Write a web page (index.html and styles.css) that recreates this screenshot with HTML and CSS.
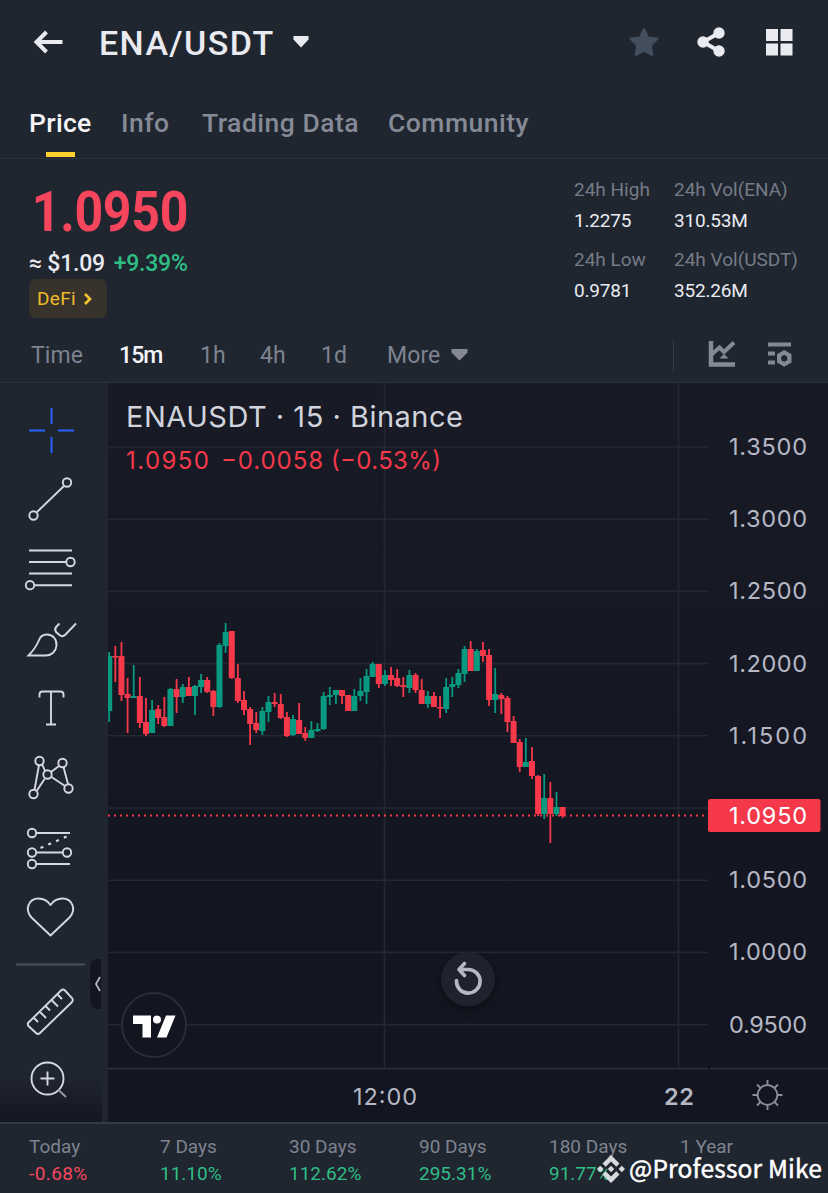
FILE: index.html
```html
<!DOCTYPE html>
<html lang="en">
<head>
    <meta charset="UTF-8">
    <meta name="viewport" content="width=device-width, initial-scale=1.0">
    <title>ENA/USDT</title>
    <link rel="stylesheet" href="styles.css">
</head>
<body>
    <header class="header">
        <svg class="back" width="32" height="26" viewBox="0 0 32 26"><path d="M29.5 13H4M13.5 3L3.5 13L13.5 23" fill="none" stroke="#eaebf0" stroke-width="4"/></svg>
        <h1>ENA/USDT</h1>
        <svg class="caret" width="16" height="12" viewBox="0 0 16 12"><path d="M.5 0h15v3.5L8 11.5L.5 3.5z" fill="#eaebf0"/></svg>
        <div class="actions">
            <svg width="30" height="30" viewBox="0 0 30 30"><path d="M15 2L19 10.5L28.5 11.5L21.7 18.5L23.3 28L15 23.7L6.7 28L8.3 18.5L1.5 11.5L11 10.5z" fill="#434f5c" stroke="#434f5c" stroke-width="2" stroke-linejoin="round"/></svg>
            <svg width="30" height="30" viewBox="0 0 30 30"><path d="M23 6L7 15L23 24" fill="none" stroke="#eaebf0" stroke-width="4"/><g fill="#eaebf0"><circle cx="23" cy="6" r="5.7"/><circle cx="7" cy="15" r="5.7"/><circle cx="23" cy="24" r="5.7"/></g></svg>
            <svg width="28" height="28" viewBox="0 0 28 28"><path d="M1 1h12v12H1zM15.5 1h12v12h-12zM1 15.5h12v12H1zM15.5 15.5h12v12h-12z" fill="#eaebf0"/></svg>
        </div>
    </header>

    <nav class="tabs">
        <a class="active">Price</a>
        <a>Info</a>
        <a>Trading Data</a>
        <a>Community</a>
    </nav>

    <section class="summary">
        <div class="price-box">
            <div class="price">1.0950</div>
            <div class="sub"><span>≈ $1.09</span><span class="up">+9.39%</span></div>
            <div class="tag">DeFi <svg width="9" height="12" viewBox="0 0 9 12"><path d="M2 1L7 6L2 11" fill="none" stroke="#f5c72e" stroke-width="2.6"/></svg></div>
        </div>
        <dl class="stats">
            <div><dt>24h High</dt><dd>1.2275</dd></div>
            <div><dt>24h Vol(ENA)</dt><dd>310.53M</dd></div>
            <div><dt>24h Low</dt><dd>0.9781</dd></div>
            <div><dt>24h Vol(USDT)</dt><dd>352.26M</dd></div>
        </dl>
    </section>

    <nav class="intervals">
        <a>Time</a>
        <a class="active">15m</a>
        <a>1h</a>
        <a>4h</a>
        <a>1d</a>
        <a class="more">More <svg width="17" height="12" viewBox="0 0 17 12"><path d="M.5 0h16v3.5L8.5 11.5L.5 3.5z" fill="#858a96"/></svg></a>
        <div class="chart-actions">
            <svg width="28" height="28" viewBox="0 0 28 28"><path d="M3 1v23.500h24" fill="none" stroke="#848995" stroke-width="4.500"/><path d="M3 15L11.500 7.500L16 12L26 2.500" fill="none" stroke="#848995" stroke-width="4"/><path d="M11.500 18.500l4.500-4.500l4.500 4.500z" fill="#848995"/></svg>
            <svg width="26" height="26" viewBox="0 0 26 26"><path d="M1 1.500h23v4H1zM1 10.500h7v4H1zM1 19.500h7v4H1z" fill="#848995"/><path fill-rule="evenodd" d="M17.200 9L24.500 13.200V21.500L17.200 25.700L10 21.500V13.200zM17.200 14.100a3.200 3.200 0 1 0 .01 0z" fill="#848995"/></svg>
        </div>
    </nav>

    <main class="workspace">
        <aside class="tools">
            <svg width="102" height="739" viewBox="0 383 102 739" fill="none" stroke="#d5d8e0" stroke-width="1.900">
                <!-- crosshair -->
                <path d="M51.500 408v16M51.500 437v16M29 430.500h16M58 430.500h16" stroke="#2962ff" stroke-width="2"/>
                <!-- trend line -->
                <path d="M37 512L64 486"/><circle cx="33.500" cy="515.500" r="4.200"/><circle cx="67" cy="482.500" r="4.200"/>
                <!-- fib levels -->
                <path d="M29 550.500h43M29 562h37M29 573.500h43M35 585.200h37"/><circle cx="70.500" cy="562" r="4.200"/><circle cx="30" cy="585.200" r="4.200"/>
                <!-- brush -->
                <path d="M28.500 655.500C34 650 37 645 39 640Q41 634.500 47 634.500C53 634.500 57 639.500 56.500 645.500C56 651.500 51.500 655.500 46 655.500zM59.500 623.500L56.500 626.500Q54 629 56 632L59.500 635Q62.500 637.500 65.500 634.500L76 623.500"/>
                <!-- text -->
                <path d="M39.500 697.500v-3q0-3 3-3h18q3 0 3 3v3M51 691.500v33M46 724.500h10"/>
                <!-- pattern -->
                <path d="M39 765L34.500 790M37 790.500L44.500 779M42 764L45 771M51 772L59 766M63.500 767L68 784M51.500 777L65 786"/>
                <circle cx="39.500" cy="761" r="4.200"/><circle cx="62.500" cy="763" r="4.200"/><circle cx="47.500" cy="774.500" r="4.200"/><circle cx="33.500" cy="794" r="4.200"/><circle cx="68.500" cy="788.500" r="4.200"/>
                <!-- position -->
                <path d="M36 833h34M36 852.500h26M36 864h34"/><path d="M40.500 848L69 835.500" stroke-dasharray="3 5.500" stroke-width="2.200"/>
                <circle cx="32" cy="833" r="4.200"/><circle cx="32" cy="852.500" r="4.200"/><circle cx="67" cy="852.500" r="4.200"/><circle cx="32" cy="864" r="4.200"/>
                <!-- heart -->
                <path d="M50.500 935.500L31.500 917.500C24 909 29 898.500 38.500 898.500C44 898.500 47.500 900.500 50.500 905C53.500 900.500 57 898.500 62.500 898.500C72 898.500 77 909 69.500 917.500z" stroke-linejoin="round"/>
                <path d="M16 964.500h69" stroke="#4d515d" stroke-width="2"/>
                <!-- ruler -->
                <path d="M28.500 1022.500L61 990.500Q63 988.500 65 990.500L72 998Q73.500 1000 72 1002L40 1033Q38 1035 36 1033L28.500 1026Q27 1024 28.500 1022.500zM34 1018l4 4M40 1012l6 6M46 1006.500l4 4M52 1000.500l6 6M58 995l4 4"/>
                <!-- zoom in -->
                <circle cx="47.500" cy="1078.500" r="16"/><path d="M40.500 1078.500h14M47.500 1071.500v14"/><path d="M58.500 1090l7.500 7" stroke="#9598a2"/>
            </svg>
            <div class="handle"><svg width="7" height="16" viewBox="0 0 7 16"><path d="M6 1L2 8L6 15" fill="none" stroke="#b2b5be" stroke-width="1.800"/></svg></div>
        </aside>
        <svg class="chart" id="chart" width="720" height="739" viewBox="108 383 720 739">
            <g id="grid"></g>
            <g id="candles"></g>
            <path d="M108 815.500H708" stroke="#f23645" stroke-width="1.800" stroke-dasharray="2 4"/>
            <text x="126" y="426.500" class="symbol" textLength="337">ENAUSDT · 15 · Binance</text>
            <text x="126" y="468.500" class="change" textLength="83">1.0950</text>
            <text x="221" y="468.500" class="change" textLength="102">−0.0058</text>
            <text x="331" y="468.500" class="change" textLength="110">(−0.53%)</text>
            <g id="axis"></g>
            <rect x="708" y="799" width="112.500" height="33" rx="2" fill="#f5384a"/>
            <text x="729" y="824" class="label now" textLength="78">1.0950</text>
            <text x="353" y="1105" class="label" textLength="64">12:00</text>
            <text x="664" y="1105" class="label bold" textLength="30">22</text>
            <!-- chart settings -->
            <g fill="none" stroke="#8c8f99" stroke-width="1.800"><circle cx="767.500" cy="1095" r="9.800"/><path d="M767.500 1085v-5M767.500 1105v5M757.500 1095h-5M777.500 1095h5M760.500 1088l-3.500-3.500M774.500 1088l3.500-3.500M760.500 1102l-3.500 3.500M774.500 1102l3.500 3.500"/></g>
            <!-- tradingview mark -->
            <circle cx="154" cy="1025" r="32" fill="#131520" stroke="#2a2d38" stroke-width="2"/>
            <path d="M133 1015.500h18v22h-8.500v-13.500H133zM166 1015.500h9.500l-9 22H157z" fill="#fff"/><circle cx="157" cy="1019.500" r="4" fill="#fff"/>
            <!-- reset -->
            <circle class="reset" cx="468" cy="979.500" r="27" fill="#1e222c"/>
            <path d="M456.500 980.500A11.800 11.800 0 1 0 468 969.500H459M464.500 963.500L459 969.500L464.500 975.500" fill="none" stroke="#b5b7c3" stroke-width="3.600" stroke-linecap="round" stroke-linejoin="round"/>
        </svg>
    </main>

    <footer class="returns">
        <div><span>Today</span><b class="down">-0.68%</b></div>
        <div><span>7 Days</span><b>11.10%</b></div>
        <div><span>30 Days</span><b>112.62%</b></div>
        <div><span>90 Days</span><b>295.31%</b></div>
        <div><span>180 Days</span><b>91.77%</b></div>
        <div><span>1 Year</span><b class="none">-</b></div>
        <div class="author">
            <svg width="28" height="28" viewBox="0 0 28 28" fill="#d9dadd"><path d="M14 0L22.500 8.500L19.300 11.700L14 6.400L8.700 11.700L5.500 8.500zM14 28L22.500 19.500L19.300 16.300L14 21.600L8.700 16.300L5.500 19.500zM3.200 10.800L6.400 14L3.200 17.200L0 14zM24.800 10.800L28 14L24.800 17.200L21.600 14zM14 10.800L17.200 14L14 17.200L10.800 14z"/></svg>
            <span>@Professor Mike</span>
        </div>
    </footer>

    <script src="chart.js"></script>
</body>
</html>
```
FILE: styles.css
```css
* {
    box-sizing: border-box;
}
body {
    margin: 0;
    width: 828px;
    height: 1193px;
    overflow: hidden;
    background-color: #202630;
    color: #eaebf0;
    font-family: Roboto, "Liberation Sans", sans-serif;
    display: flex;
    flex-direction: column;
}
svg {
    display: block;
    flex: none;
}
.header {
    height: 87px;
    padding: 0 35px 3px 33px;
    display: flex;
    align-items: center;
}
h1 {
    margin: 2px 0 0 34px;
    width: 179px;
    font-size: 34px;
    line-height: 40px;
    font-weight: 500;
    letter-spacing: 1.4px;
    white-space: nowrap;
}
.caret {
    margin-left: 15px;
}
.actions {
    margin-left: auto;
    display: flex;
    align-items: center;
    gap: 39px;
}
.actions svg:first-child {
    margin-right: -2px;
}
.tabs {
    height: 72px;
    padding-left: 29px;
    display: grid;
    grid-template-columns: 92px 81px 186px auto;
    border-bottom: 1px solid #2b313b;
    font-size: 26.5px;
    line-height: 71px;
    font-weight: 500;
    letter-spacing: 0.5px;
    color: #858a96;
}
.tabs .active {
    position: relative;
    color: #f5f5f8;
    letter-spacing: 0.3px;
}
.tabs .active::after {
    content: "";
    position: absolute;
    left: 17px;
    bottom: 1px;
    width: 29px;
    height: 5px;
    background-color: #fcd12f;
}
.summary {
    height: 170px;
    padding: 20px 28px 0 29px;
    display: flex;
    justify-content: space-between;
}
.price {
    padding: 4px 0 0 3px;
    font-size: 55px;
    line-height: 58px;
    font-weight: 700;
    letter-spacing: -0.3px;
    color: #f6465d;
    transform: scaleX(0.91);
    transform-origin: left;
}
.sub {
    margin-top: 9px;
    display: flex;
    gap: 9px;
    font-size: 23px;
    line-height: 28px;
    font-weight: 500;
    letter-spacing: -0.25px;
}
.up {
    color: #2ebd85;
}
.tag {
    margin-top: 1px;
    width: 78px;
    height: 39px;
    padding-left: 8px;
    display: flex;
    align-items: center;
    gap: 7px;
    border-radius: 7px;
    background-color: #37332c;
    color: #f0bb2a;
    font-size: 19px;
    letter-spacing: 0.3px;
}
.stats {
    margin: 0;
    display: grid;
    grid-template-columns: 100px 126px;
    grid-auto-rows: 70px;
    white-space: nowrap;
}
dt {
    font-size: 19px;
    line-height: 22px;
    color: #757b86;
}
dd {
    margin: 8px 0 0;
    font-size: 19px;
    line-height: 24px;
    letter-spacing: -0.2px;
}
.intervals {
    height: 54px;
    padding: 0 35px 0 31px;
    display: grid;
    grid-template-columns: 88px 81px 60px 61px 66px 286px auto;
    align-items: center;
    font-size: 23px;
    letter-spacing: 0.1px;
    color: #7d838f;
    border-bottom: 1px solid #2b313b;
}
.intervals .active {
    color: #f5f5f8;
    font-weight: 500;
    letter-spacing: -0.9px;
}
.more {
    display: flex;
    align-items: center;
    gap: 11px;
}
.more svg {
    margin-bottom: 2px;
}
.chart-actions {
    height: 32px;
    padding: 0 0 3px 34px;
    display: flex;
    align-items: center;
    justify-content: space-between;
    border-left: 1px solid #343a45;
}
.workspace {
    height: 739px;
    display: flex;
}
.tools {
    position: relative;
    width: 108px;
}
.tools > svg {
    background: linear-gradient(#202630 0 690px, #141620 739px);
}
.handle {
    position: absolute;
    right: 7px;
    top: 576px;
    width: 11px;
    height: 50px;
    padding-left: 4px;
    display: flex;
    align-items: center;
    background-color: #131520;
    border-radius: 8px 0 0 8px;
}
.chart {
    background: linear-gradient(#181a26, #131520 75%);
    font-family: Inter, "Liberation Sans", sans-serif;
}
.symbol {
    font-size: 29px;
    fill: #d1d4dc;
}
.change {
    font-size: 24px;
    fill: #f5384a;
}
.label {
    font-size: 23.5px;
    fill: #b5b8c4;
}
.now {
    fill: #fff;
}
.bold {
    font-weight: 600;
}
.reset {
    filter: drop-shadow(0 3px 3px rgba(0, 0, 0, 0.4));
}
.returns {
    position: relative;
    height: 71px;
    padding: 10px 0 0 29px;
    display: grid;
    grid-template-columns: 131px 129px 130px 130px 131px auto;
    align-content: start;
    border-top: 2px solid #343944;
    font-size: 19px;
    white-space: nowrap;
}
.returns span {
    display: block;
    line-height: 25px;
    color: #7d838f;
}
.returns b {
    display: block;
    line-height: 29px;
    font-weight: 400;
    color: #2ebd85;
}
.returns .down {
    color: #f6465d;
    letter-spacing: 0.4px;
}
.returns .none {
    padding-left: 6px;
    color: #7d838f;
}
.returns .author {
    position: absolute;
    left: 597px;
    top: 31px;
    display: flex;
    align-items: center;
    gap: 4px;
}
.returns .author span {
    margin-top: -2px;
    font-family: "Noto Sans CJK SC", "Noto Sans", sans-serif;
    font-size: 24.5px;
    line-height: 30px;
    font-weight: 400;
    letter-spacing: 0.2px;
    color: #fff;
    -webkit-text-stroke: 0.5px #fff;
}
```
FILE: chart.js
```js
const NS = 'http://www.w3.org/2000/svg';

const add = (parent, name, attrs, text) => {
    const el = document.createElementNS(NS, name);
    for (const key in attrs) el.setAttribute(key, attrs[key]);
    if (text) el.textContent = text;
    document.getElementById(parent).appendChild(el);
};

// color, wick top, body top, body bottom, wick bottom
const candles = [
    ['g', 652, 656, 711, 722], ['r', 646, 656, 657, 682], ['r', 642, 656, 695, 701],
    ['r', 678, 694, 698, 733], ['g', 665, 696, 698, 698], ['r', 677, 696, 723, 728],
    ['r', 698, 722, 734, 736], ['g', 700, 710, 733, 733], ['r', 705, 709, 718, 724],
    ['r', 697, 717, 726, 727], ['g', 688, 689, 726, 726], ['r', 679, 689, 697, 713],
    ['g', 684, 687, 697, 703], ['r', 677, 687, 696, 696], ['g', 685, 686, 696, 715],
    ['g', 674, 680, 687, 693], ['r', 677, 680, 692, 693], ['r', 690, 691, 707, 716],
    ['g', 643, 645, 707, 708], ['g', 623, 632, 646, 653], ['r', 631, 631, 678, 679],
    ['r', 664, 678, 701, 703], ['r', 691, 700, 710, 715], ['r', 707, 709, 724, 745],
    ['r', 712, 723, 730, 733], ['g', 707, 711, 731, 735], ['g', 696, 702, 712, 722],
    ['r', 693, 702, 704, 707], ['r', 694, 704, 718, 719], ['r', 712, 717, 736, 737],
    ['g', 715, 719, 735, 736], ['r', 703, 720, 734, 734], ['r', 727, 733, 738, 741],
    ['g', 721, 730, 738, 738], ['g', 723, 729, 731, 732], ['g', 692, 696, 729, 730],
    ['g', 687, 695, 697, 705], ['g', 690, 690, 695, 704], ['r', 690, 690, 696, 704],
    ['r', 695, 695, 711, 711], ['g', 689, 696, 711, 711], ['g', 678, 691, 696, 701],
    ['g', 669, 676, 692, 704], ['g', 662, 664, 677, 677], ['r', 664, 664, 684, 688],
    ['g', 670, 675, 684, 686], ['r', 667, 675, 680, 686], ['r', 669, 678, 686, 687],
    ['r', 677, 685, 687, 697], ['g', 670, 675, 688, 693], ['r', 673, 675, 690, 693],
    ['r', 679, 690, 704, 704], ['g', 691, 696, 704, 708], ['r', 692, 696, 707, 707],
    ['r', 696, 707, 708, 718], ['g', 678, 687, 709, 713], ['g', 677, 684, 687, 697],
    ['g', 669, 673, 685, 688], ['g', 646, 649, 674, 682], ['r', 641, 649, 671, 671],
    ['g', 649, 651, 671, 671], ['r', 642, 650, 656, 662], ['r', 649, 655, 700, 706],
    ['g', 668, 694, 700, 713], ['r', 693, 695, 699, 714], ['r', 696, 698, 722, 732],
    ['r', 716, 721, 743, 743], ['r', 739, 742, 767, 772], ['g', 738, 762, 767, 767],
    ['r', 747, 761, 776, 779], ['r', 775, 776, 814, 816], ['g', 774, 798, 814, 819],
    ['r', 782, 798, 814, 843], ['g', 792, 807, 814, 816], ['r', 807, 807, 816, 818]
];
const colors = { g: '#089981', r: '#f5384a' };

candles.forEach(([side, high, top, bottom, low], i) => {
    const x = 109.2 + i * 6.127;
    add('candles', 'rect', { x: x - 0.9, y: high, width: 1.8, height: low - high, fill: colors[side] });
    add('candles', 'rect', { x: x - 3, y: top, width: 6, height: Math.max(bottom - top, 1.5), fill: colors[side] });
});

// horizontal lines, one for each price step
const prices = ['1.3500', '1.3000', '1.2500', '1.2000', '1.1500', '', '1.0500', '1.0000', '0.9500'];
prices.forEach((price, i) => {
    const y = 447 + i * 72.2;
    add('grid', 'path', { d: `M108 ${y}H708`, stroke: '#252832', 'stroke-width': 1.6 });
    if (price) add('axis', 'text', { x: 729, y: y + 8, class: 'label', textLength: 78 }, price);
});

[384.5, 678.5].forEach(x => {
    add('grid', 'path', { d: `M${x} 383V1068`, stroke: '#252832', 'stroke-width': 1.6 });
});
add('grid', 'path', { d: 'M108 1068.7H708M710 1068.7H828', stroke: '#2c2f3a', 'stroke-width': 1.8 });
```
